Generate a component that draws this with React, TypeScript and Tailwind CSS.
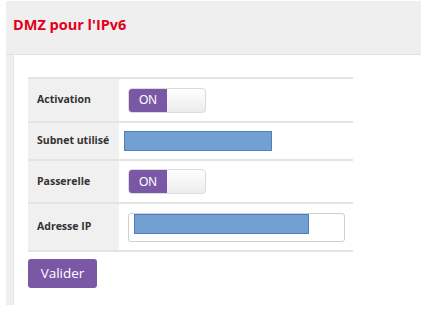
import * as React from 'react';

function Toggle(): JSX.Element {
  return (
    <div className="flex h-[25px] w-[78px] overflow-hidden rounded-[4px] border border-[#dcdcdc] bg-gradient-to-b from-white to-[#ececec]">
      <div className="flex w-[38px] items-center justify-center bg-[#7b58a5] text-[12px] text-white [font-family:'Liberation_Sans',sans-serif]">
        ON
      </div>
      <div className="flex-1" />
    </div>
  );
}

function BlueBar({className}: {className: string}): JSX.Element {
  return <div className={`border border-[#4f7fb9] bg-[#71a0d1] ${className}`} />;
}

const rows: {label: string; cell: React.ReactNode; h: string}[] = [
  {label: 'Activation', cell: <div className="pl-[9px]"><Toggle /></div>, h: 'h-[44px]'},
  {label: 'Subnet utilisé', cell: <div className="pl-[5px]"><BlueBar className="h-[20px] w-[148px]" /></div>, h: 'h-[38px]'},
  {label: 'Passerelle', cell: <div className="pl-[9px]"><Toggle /></div>, h: 'h-[43px]'},
  {
    label: 'Adresse IP',
    cell: (
      <div className="pl-[9px]">
        <div className="h-[29px] w-[217px] rounded-[3px] border border-[#cfcfcf] bg-white pl-[5px]">
          <BlueBar className="h-[20px] w-[175px]" />
        </div>
      </div>
    ),
    h: 'h-[48px]',
  },
];

export default function App(): JSX.Element {
  return (
    <div className="h-[315px] w-[428px] bg-white pl-[6px] pt-px [font-family:'Open_Sans',sans-serif]">
      <div className="flex h-[304px] w-[415px] flex-col bg-[#efefef]">
        <div className="flex h-[54px] items-start border-b border-[#e2e2e2] pl-[7px] pt-[14px]">
          <h1 className="text-[14.5px] font-bold leading-[20px] text-[#e2001a]">DMZ pour l'IPv6</h1>
        </div>
        <div className="ml-[7px] flex-1 border-l border-[#e6e6e6] bg-white pl-[14px] pt-[22px]">
          <div className="w-[325px] border-t-2 border-[#e4e4e4]">
            {rows.map((r) => (
              <div key={r.label} className={`flex ${r.h} border-b-2 border-[#e4e4e4]`}>
                <div className="flex w-[91px] items-center bg-[#f0f0f0] pl-[9px] text-[10.5px] font-bold text-[#333]">
                  {r.label}
                </div>
                <div className="flex flex-1 items-center">{r.cell}</div>
              </div>
            ))}
          </div>
          <button className="mt-[7px] h-[29px] w-[69px] rounded-[3px] bg-[#7b58a6] text-[13.5px] text-white">
            Valider
          </button>
        </div>
      </div>
    </div>
  );
}
